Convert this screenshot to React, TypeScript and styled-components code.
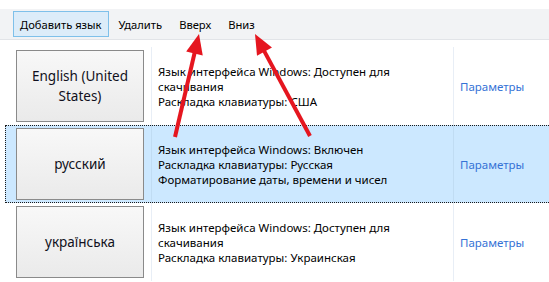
import React from "react"
import styled, { createGlobalStyle } from "styled-components";

const GlobalStyle = createGlobalStyle`
  html, body {
    margin: 0;
    padding: 0;
    background: #ffffff;
  }
  body {
    font-family: "Noto Sans", "Open Sans", sans-serif;
  }
`

type Language = {
  id: string
  name: string[]
  lines: string[]
  selected?: boolean
}

// lines are kept as shown, the original control wraps them itself
const languages: Language[] = [
  {
    id: "en",
    name: ["English (United", "States)"],
    lines: [
      "Язык интерфейса Windows: Доступен для",
      "скачивания",
      "Раскладка клавиатуры: США",
    ],
  },
  {
    id: "ru",
    name: ["русский"],
    selected: true,
    lines: [
      "Язык интерфейса Windows: Включен",
      "Раскладка клавиатуры: Русская",
      "Форматирование даты, времени и чисел",
    ],
  },
  {
    id: "uk",
    name: ["українська"],
    lines: [
      "Язык интерфейса Windows: Доступен для",
      "скачивания",
      "Раскладка клавиатуры: Украинская",
    ],
  },
]

const Page = styled.div`
  position: relative;
  width: 549px;
  height: 282px;
  overflow: hidden;
  padding-top: 9px;
  box-sizing: border-box;
`

const Toolbar = styled.div`
  display: flex;
  align-items: center;
  gap: 3px;
  height: 31px;
  padding-left: 13px;
  background: #f2f3f5;
  border-bottom: 1px solid #e2e4e8;
  box-sizing: border-box;
`

const ToolButton = styled.div<{ $active?: boolean }>`
  height: 26px;
  display: flex;
  align-items: center;
  padding: 1px 6px 0;
  box-sizing: border-box;
  font-size: 11.2px;
  color: #000;
  white-space: nowrap;
  border: 1px solid ${ ({$active}) => $active ? "#7ec0ea" : "transparent" };
  background: ${ ({$active}) => $active ? "#dcecf9" : "transparent" };
`

const List = styled.div`
  display: flex;
  flex-direction: column;
  padding: 7px 0 0 5px;
`

const Row = styled.div<{ $selected?: boolean }>`
  display: grid;
  grid-template-columns: 145px 302px 1fr;
  height: 78px;
  box-sizing: border-box;
  border: 1px dotted ${ ({$selected}) => $selected ? "#1a1a1a" : "transparent" };
  border-right: none;
  background: ${ ({$selected}) => $selected ? "#cce8ff" : "transparent" };
`

const ButtonCell = styled.div`
  display: flex;
  align-items: center;
  padding-left: 10px;
`

const LangButton = styled.div`
  width: 128px;
  height: 72px;
  box-sizing: border-box;
  display: flex;
  flex-direction: column;
  align-items: center;
  justify-content: center;
  text-align: center;
  border: 1px solid #8a8a8a;
  background: linear-gradient(#f8f8f8, #eaeaea);
  font-size: 13.5px;
  line-height: 20px;
  color: #101020;
  white-space: nowrap;
`

const Details = styled.div<{ $selected?: boolean }>`
  display: flex;
  flex-direction: column;
  justify-content: center;
  padding-left: 6px;
  border-left: 1px solid ${ ({$selected}) => $selected ? "#c0dcf3" : "#e8eef6" };
  font-size: 11.5px;
  line-height: 15px;
  color: #000;
  white-space: nowrap;
  margin: -1px 0;
`

const LinkCell = styled.div<{ $selected?: boolean }>`
  display: flex;
  align-items: center;
  padding-left: 6px;
  border-left: 1px solid ${ ({$selected}) => $selected ? "#c0dcf3" : "#e8eef6" };
  font-size: 11.5px;
  color: #3572d6;
  margin: -1px 0;
`

const Overlay = styled.svg`
  position: absolute;
  left: 0;
  top: 0;
  pointer-events: none;
`

const Arrow = ({from, to}: { from: [number, number], to: [number, number] }) => {
  const dx = to[0] - from[0]
  const dy = to[1] - from[1]
  const len = Math.hypot(dx, dy)
  const ux = dx / len
  const uy = dy / len
  const head = 20
  const half = 8.5
  const bx = to[0] - ux * head
  const by = to[1] - uy * head
  const px = -uy
  const py = ux
  const points = [
    `${ to[0] },${ to[1] }`,
    `${ bx + px * half },${ by + py * half }`,
    `${ bx - px * half },${ by - py * half }`,
  ].join(" ")
  return <g>
    <line x1={ from[0] } y1={ from[1] } x2={ bx + ux * 2 } y2={ by + uy * 2 } stroke="#e5161f" strokeWidth={ 4 }/>
    <polygon points={ points } fill="#e5161f"/>
  </g>
}

export default function App() {
  return <Page>
    <GlobalStyle/>
    <Toolbar>
      <ToolButton $active>Добавить язык</ToolButton>
      <ToolButton>Удалить</ToolButton>
      <ToolButton>Вверх</ToolButton>
      <ToolButton>Вниз</ToolButton>
    </Toolbar>
    <List>
      { languages.map(lang => (
        <Row key={ lang.id } $selected={ lang.selected }>
          <ButtonCell>
            <LangButton>
              { lang.name.map(part => <div key={ part }>{ part }</div>) }
            </LangButton>
          </ButtonCell>
          <Details $selected={ lang.selected }>
            { lang.lines.map(line => <div key={ line }>{ line }</div>) }
          </Details>
          <LinkCell $selected={ lang.selected }>Параметры</LinkCell>
        </Row>
      )) }
    </List>
    <Overlay width={ 549 } height={ 282 }>
      <Arrow from={ [175, 137] } to={ [199, 34] }/>
      <Arrow from={ [310, 136] } to={ [255, 34] }/>
    </Overlay>
  </Page>
}
